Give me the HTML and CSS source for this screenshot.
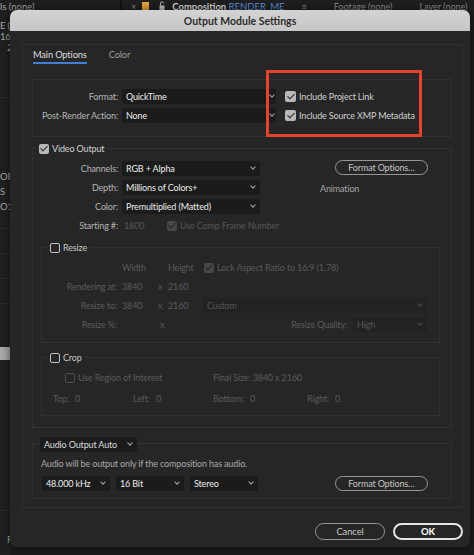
FILE: index.html
```html
<!DOCTYPE html>
<html>
<head>
  <meta charset="UTF-8">
  <title>Output Module Settings</title>
  <link rel="stylesheet" href="styles.css">
</head>
<body>
  <div class="tabbar">
    <div class="tb-panel">ls (none)</div>
    <div class="tb-tabs">
      <span class="tb-x">×</span>
      <span class="tb-swatch"></span>
      <svg class="tb-lock" width="6" height="9" viewBox="0 0 6 9"><path d="M1.5 4.5V2.3a1.4 1.4 0 0 1 2.8 0" fill="none" stroke="#bdbdbd" stroke-width="1"/><rect x="0.5" y="4.5" width="5" height="4.5" fill="#bdbdbd"/></svg>
      <span class="tb-comp">Composition <span class="tb-name">RENDER_ME</span></span>
      <span class="tb-menu">≡</span>
      <span class="tb-foot">Footage (none)</span>
      <span class="tb-layer">Layer (none)</span>
    </div>
  </div>

  <div class="side">
    <div class="side-txt s-e">E (</div>
    <div class="side-txt s-16">16(</div>
    <div class="side-txt s-29">29</div>
    <div class="side-line l1"></div>
    <div class="side-txt s-or">OR</div>
    <div class="side-txt s-s">S</div>
    <div class="side-txt s-o1">O1</div>
    <div class="side-line l2"></div>
    <div class="side-line l3"></div>
    <div class="side-line l3"></div>
    <div class="side-line l3"></div>
    <div class="side-block"></div>
    <div class="side-line l4"></div>
    <div class="side-txt s-f">F</div>
  </div>

  <div class="dialog">
    <div class="titlebar">Output Module Settings</div>
    <div class="dialog-body">
      <div class="tabpanel">
        <div class="tabs">
          <span class="tab active">Main Options</span>
          <span class="tab">Color</span>
        </div>

        <div class="box format-box">
          <div class="row">
            <span class="lbl">Format:</span>
            <div class="sel w-format">QuickTime</div>
            <span class="cb on big"></span><span class="cb-text">Include Project Link</span>
          </div>
          <div class="row">
            <span class="lbl">Post-Render Action:</span>
            <div class="sel w-format">None</div>
            <span class="cb on big"></span><span class="cb-text">Include Source XMP Metadata</span>
          </div>
        </div>

        <div class="box group video">
          <div class="legend"><span class="cb on"></span>Video Output</div>
          <div class="video-top">
            <div class="video-rows">
              <div class="row">
                <span class="lbl">Channels:</span>
                <div class="sel w-video">RGB + Alpha</div>
              </div>
              <div class="row">
                <span class="lbl">Depth:</span>
                <div class="sel w-video">Millions of Colors+</div>
              </div>
              <div class="row">
                <span class="lbl">Color:</span>
                <div class="sel w-video">Premultiplied (Matted)</div>
              </div>
              <div class="row">
                <span class="lbl">Starting #:</span>
                <span class="dim start-num">1800</span>
                <span class="cb on dis"></span><span class="cb-text dim">Use Comp Frame Number</span>
              </div>
            </div>
            <div class="video-side">
              <div class="pill fmt-btn">Format Options…</div>
              <div class="codec">Animation</div>
            </div>
          </div>

          <div class="box group resize">
            <div class="legend"><span class="cb off"></span>Resize</div>
            <div class="rrow">
              <span></span><span>Width</span><span></span><span>Height</span>
              <span class="lock"><span class="cb on dis"></span>Lock Aspect Ratio to 16:9 (1.78)</span>
            </div>
            <div class="rrow">
              <span class="rlbl">Rendering at:</span><span>3840</span><span>x</span><span>2160</span><span></span>
            </div>
            <div class="rrow">
              <span class="rlbl">Resize to:</span><span>3840</span><span>x</span><span>2160</span>
              <span class="rcell"><div class="sel dis w-custom">Custom</div></span>
            </div>
            <div class="rrow">
              <span class="rlbl">Resize %:</span><span></span><span class="xpad">x</span><span></span>
              <span class="rcell">Resize Quality:<div class="sel dis w-high">High</div></span>
            </div>
          </div>

          <div class="box group crop">
            <div class="legend"><span class="cb off"></span>Crop</div>
            <div class="crow1">
              <span class="roi"><span class="cb off dis"></span>Use Region of Interest</span>
              <span>Final Size: 3840 x 2160</span>
            </div>
            <div class="crow2">
              <span>Top:<i>0</i></span>
              <span>Left:<i>0</i></span>
              <span>Bottom:<i>0</i></span>
              <span>Right:<i>0</i></span>
            </div>
          </div>
        </div>

        <div class="box group audio">
          <div class="sel audio-sel">Audio Output Auto</div>
          <div class="audio-note">Audio will be output only if the composition has audio.</div>
          <div class="audio-row">
            <div class="sel w-a">48.000 kHz</div>
            <div class="sel w-a">16 Bit</div>
            <div class="sel w-a">Stereo</div>
            <div class="pill fmt-btn">Format Options…</div>
          </div>
        </div>
      </div>

      <div class="actions">
        <button class="pill btn">Cancel</button>
        <button class="pill btn ok">OK</button>
      </div>
    </div>
    <div class="highlight"></div>
  </div>
</body>
</html>
```

FILE: styles.css
```css
* {
  box-sizing: border-box;
}

body {
  margin: 0;
  width: 474px;
  height: 555px;
  overflow: hidden;
  position: relative;
  background-color: #1c1c1c;
  color: #bdbdbd;
  font-family: Lato, "Open Sans", sans-serif;
  font-size: 9px;
  letter-spacing: -0.15px;
}

/* app behind the dialog */
.tabbar {
  height: 12px;
  display: flex;
  white-space: nowrap;
  line-height: 13px;
  color: #8e8e8e;
  letter-spacing: 0;
}

.tb-panel {
  flex: none;
  width: 122px;
  background-color: #1f1f1f;
  border-right: 2px solid #121212;
  color: #a5a5a5;
  font-size: 9.5px;
}

.tb-tabs {
  flex: 1;
  display: flex;
  align-items: flex-start;
  background-color: #1f1f1f;
  overflow: hidden;
}

.tb-tabs > * {
  flex: none;
}

.tb-x {
  margin-left: 9px;
  color: #8a8a8a;
}

.tb-swatch {
  width: 7px;
  height: 9px;
  margin: 2px 0 0 6px;
  background-color: #e9a23b;
}

.tb-lock {
  margin: 1px 0 0 10px;
}

.tb-comp {
  margin-left: 7px;
  color: #dadada;
  font-weight: bold;
  font-size: 9.5px;
}

.tb-name {
  color: #5d90db;
  font-weight: normal;
}

.tb-menu {
  margin-left: 17px;
  color: #9a9a9a;
}

.tb-foot {
  margin-left: 27px;
}

.tb-layer {
  margin-left: 27px;
}

.side {
  width: 10px;
  height: 543px;
  background-color: #202020;
  overflow: hidden;
  color: #a8a8a8;
  font-size: 9.5px;
  line-height: 11px;
  white-space: nowrap;
}

.side-txt.s-e { margin-top: 8px; }
.side-txt.s-29 { padding-left: 7px; }
.side-txt.s-or { margin-top: 73px; }
.side-txt.s-s,
.side-txt.s-o1 { margin-top: 4px; }
.side-txt.s-f { margin-top: 23px; padding-left: 7px; }

.side-line {
  height: 1px;
  background-color: #2b2b2b;
}

.side-line.l1 { margin-top: 44px; }
.side-line.l2 { margin-top: 16px; }
.side-line.l3 { margin-top: 24px; }
.side-line.l4 { margin-top: 150px; }

.side-block {
  height: 13px;
  margin-top: 43px;
  background-color: #a9a9a9;
}

/* dialog */
.dialog {
  position: absolute;
  left: 10px;
  top: 10px;
  width: 460px;
  height: 537px;
  background-color: #262626;
  border-radius: 7px;
  overflow: hidden;
  box-shadow: 0 0 8px rgba(0, 0, 0, 0.6);
}

.titlebar {
  height: 21px;
  display: flex;
  align-items: center;
  justify-content: center;
  background: linear-gradient(#d3d3d3, #c6c6c6);
  color: #2c2c2c;
  font-size: 10.5px;
  font-weight: bold;
  letter-spacing: 0;
}

.dialog-body {
  padding: 13px 7px 0 12px;
}

.tabpanel {
  border: 1px solid #303030;
  padding: 0 10px 8px 9px;
}

.tabs {
  height: 34px;
  display: flex;
  padding-left: 1px;
  gap: 22px;
}

.tab {
  margin-top: 4px;
  height: 15px;
  line-height: 12px;
  color: #9c9c9c;
  font-size: 9.3px;
}

.tab.active {
  color: #dedede;
  border-bottom: 2px solid #3d7fd6;
}

.box {
  border: 1px solid #313131;
}

.row {
  display: flex;
  align-items: center;
  height: 15px;
  margin-bottom: 4px;
}

.row:last-child {
  margin-bottom: 0;
}

.lbl {
  width: 85px;
  margin-right: 4px;
  text-align: right;
  color: #b4b4b4;
}

.format-box {
  padding: 9px 0 13px;
}

.sel {
  height: 15px;
  display: flex;
  align-items: center;
  justify-content: space-between;
  padding: 0 5px 0 4px;
  background-color: #1b1b1b;
  border-radius: 2px;
  color: #ececec;
  white-space: nowrap;
}

.sel::after {
  content: "";
  width: 3px;
  height: 3px;
  margin-top: -3px;
  border-right: 1px solid #a8a8a8;
  border-bottom: 1px solid #a8a8a8;
  transform: rotate(45deg);
}

.sel.dis {
  background-color: #222222;
  color: #575757;
}

.sel.dis::after {
  border-color: #4a4a4a;
}

.w-format { width: 154px; padding-right: 2px; }
.w-video { width: 138px; }
.w-custom { width: 224px; }
.w-high { width: 74px; margin-left: 6px; }
.w-a { width: 68px; margin-right: 6px; }

.cb {
  flex: none;
  width: 10px;
  height: 10px;
  margin-right: 3px;
  border-radius: 2px;
  display: inline-flex;
  align-items: center;
  justify-content: center;
  vertical-align: middle;
}

.cb.big {
  width: 11px;
  height: 11px;
  margin-left: 9px;
}

.cb.on {
  background-color: #b9b9b9;
}

.cb.on::after {
  content: "";
  width: 3px;
  height: 6px;
  margin-top: -2px;
  border-right: 1.5px solid #303030;
  border-bottom: 1.5px solid #303030;
  transform: rotate(45deg);
}

.cb.off {
  border: 1px solid #c2c2c2;
}

.cb.on.dis {
  background-color: #474747;
}

.cb.on.dis::after {
  border-color: #272727;
}

.cb.off.dis {
  border-color: #4e4e4e;
}

.cb-text {
  color: #cfcfcf;
}

.dim,
.cb-text.dim {
  color: #565656;
}

/* groups with a legend on the top border */
.group {
  margin-top: 11px;
}

.legend {
  width: max-content;
  height: 11px;
  display: flex;
  align-items: center;
  padding: 0 3px;
  margin-top: -6px;
  background-color: #262626;
  color: #d2d2d2;
}

.video {
  padding: 0 11px 11px 8px;
}

.video .legend {
  margin-left: -5px;
}

.video .lbl {
  width: 77px;
}

.video-top {
  display: flex;
  margin-top: 7px;
}

.video-rows {
  width: 279px;
}

.start-num {
  width: 43px;
  margin-left: 2px;
}

.video-side {
  margin-top: -1px;
}

.pill {
  height: 15px;
  display: flex;
  align-items: center;
  justify-content: center;
  border: 1.5px solid #969696;
  border-radius: 8px;
  background: transparent;
  color: #c4c4c4;
  font-family: inherit;
  font-size: 9px;
  letter-spacing: -0.15px;
  padding: 0;
}

.fmt-btn {
  width: 93px;
  margin-left: 15px;
}

.codec {
  margin-top: 8px;
  line-height: 12px;
  color: #a6a6a6;
}

.resize,
.crop {
  margin-top: 14px;
  color: #5b5b5b;
}

.resize {
  padding-bottom: 10px;
}

.resize .legend,
.crop .legend {
  margin-left: 5px;
  color: #c6c6c6;
}

.rrow {
  display: grid;
  grid-template-columns: 80px 36px 10px 35px 1fr;
  align-items: center;
  height: 15px;
  margin-top: 4px;
  white-space: nowrap;
}

.resize .legend + .rrow {
  margin-top: 7px;
}

.rlbl {
  text-align: right;
  padding-right: 5px;
}

.xpad {
  padding-left: 2px;
}

.lock {
  display: flex;
  align-items: center;
  padding-left: 1px;
}

.rcell {
  display: flex;
  align-items: center;
  justify-content: flex-end;
  padding-right: 12px;
}

.rcell .w-custom {
  margin-right: auto;
}

.crop {
  padding-bottom: 9px;
}

.crow1 {
  display: flex;
  align-items: center;
  height: 15px;
  margin-top: 7px;
  padding-left: 23px;
}

.roi {
  width: 148px;
  display: flex;
  align-items: center;
}

.crow2 {
  display: grid;
  grid-template-columns: 80px 80px 94px 1fr;
  align-items: center;
  height: 15px;
  margin-top: 6px;
  padding-left: 11px;
}

.crow2 i {
  font-style: normal;
  margin-left: 6px;
}

.audio {
  margin-top: 15px;
  padding-bottom: 7px;
}

.audio-sel {
  width: 97px;
  margin: -7px 0 0 7px;
  color: #dcdcdc;
}

.audio-note {
  margin: 6px 0 0 8px;
  line-height: 12px;
  color: #a8a8a8;
}

.audio-row {
  display: flex;
  align-items: center;
  margin: 6px 0 0 9px;
}

.audio-row .fmt-btn {
  margin-left: auto;
  margin-right: 23px;
}

.actions {
  display: flex;
  justify-content: flex-end;
  gap: 8px;
  margin-top: 15px;
}

.btn {
  width: 70px;
  height: 17px;
  border-radius: 9px;
  font-size: 9.5px;
}

.btn.ok {
  border: 2px solid #e4e4e4;
  color: #ffffff;
  font-weight: bold;
}

/* red annotation frame */
.highlight {
  position: absolute;
  left: 256px;
  top: 60px;
  width: 156px;
  height: 67px;
  border: 3px solid #e5432e;
}
```
